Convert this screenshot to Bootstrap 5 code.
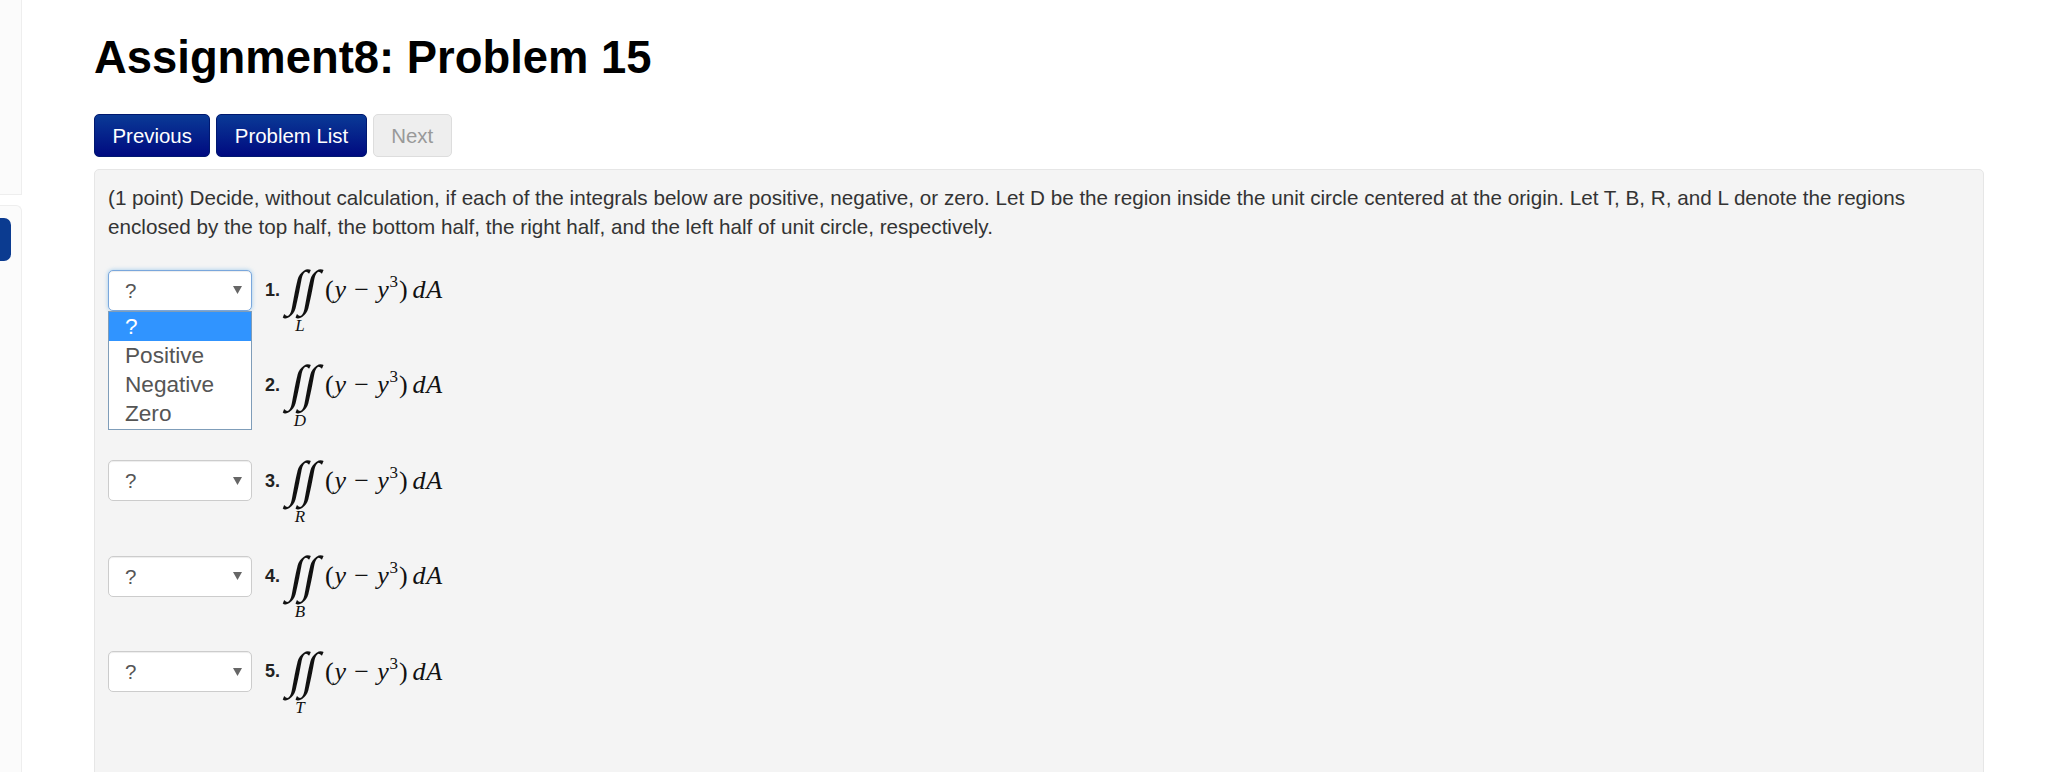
<!DOCTYPE html>
<html lang="en">
<head>
<meta charset="utf-8">
<title>Assignment8: Problem 15</title>
<link rel="stylesheet" href="https://cdn.jsdelivr.net/npm/bootstrap@5.3.0/dist/css/bootstrap.min.css">
<style>
html,body{height:772px;overflow:hidden;background:#fff;}
body{font-family:"Liberation Sans",Arial,sans-serif;font-size:20.66px;line-height:28.5px;color:#333;}
.page-wrap{height:772px;}
.side-rail{width:22px;flex:none;}
.side-top{height:195px;background:#fbfbfb;border-right:1px solid #eee;border-bottom:1px solid #eee;}
.side-bottom{flex:1;margin-top:10px;padding-top:12px;background:#fbfbfb;border:1px solid #eee;border-left:0;border-bottom:0;border-top-right-radius:6px;}
.side-pill{width:11px;height:43px;background:#0b3b90;border-radius:0 7px 7px 0;}
.main-col{padding-left:72px;padding-right:62px;min-width:0;}
.page-title{font-size:45.4px;font-weight:700;line-height:52px;color:#000;margin:32px 0 0;}
.nav-btns{margin-top:30px;gap:6px;}
.nav-btns .btn{font-size:20.4px;line-height:26px;padding:7px 17.500px;height:43px;border-radius:5px;}
.btn-navy{background:linear-gradient(#0a3a96,#000a80);border:1px solid #00186f;color:#fff;}
.btn-off{background:#eee;border:1px solid #ddd;color:#999;opacity:1;}
.btn-off:disabled{background:#eee;border-color:#ddd;color:#999;opacity:1;}
.prob-well{margin-top:12px;height:620px;background:#f4f4f4;border:1px solid #e6e6e6;border-radius:5px;padding:14px 13px 0;}
.prob-text{margin:0 0 28.500px;}
.prob-row{height:41px;margin-bottom:54.4px;}
.choice-box{position:relative;width:144px;flex:none;margin-right:13px;}
.choice{width:144px;height:41px;padding:0 0 0 16px;font-family:"Liberation Sans",Arial,sans-serif;font-size:20.5px;line-height:39px;color:#555;border:1px solid #ccc;border-radius:5px;box-shadow:inset 0 1px 1px rgba(0,0,0,.075);
background-color:#fff;background-image:url("data:image/svg+xml,%3Csvg xmlns='http://www.w3.org/2000/svg' viewBox='0 0 9 8'%3E%3Cpath fill='%23666' d='M0 0h9L4.500 8z'/%3E%3C/svg%3E");background-size:9px 8px;background-position:right 9px center;background-repeat:no-repeat;}
.choice-on{border-color:#7aa7dc;box-shadow:inset 0 1px 1px rgba(0,0,0,.075),0 0 4px rgba(102,175,233,.6);}
.choice-menu{position:absolute;left:0;top:41px;width:144px;z-index:5;background:#fff;border:1px solid #7f9db9;margin:0;padding:0;list-style:none;font-size:22.6px;line-height:29.3px;color:#555;}
.choice-menu li{padding-left:16px;}
.choice-menu .picked{background:#3094ff;color:#fff;}
.prob-num{font-weight:700;font-size:18px;color:#222;width:23px;flex:none;text-align:left;}
.formula{font-family:"Liberation Serif","Times New Roman",serif;color:#111;font-size:26px;line-height:30px;letter-spacing:.85px;}
.int-stack{width:37px;height:30px;position:relative;flex:none;}
.int-signs{position:absolute;left:3px;top:-13px;font-size:50px;line-height:52px;height:52px;font-family:"Liberation Serif",serif;letter-spacing:-1px;white-space:nowrap;transform:skewX(-11deg);}
.int-sub{position:absolute;left:2px;top:42px;width:20px;text-align:center;font-size:17px;line-height:18px;font-style:italic;letter-spacing:0;}
.formula i{font-style:italic;}
.formula sup{font-size:17px;top:-.65em;}
</style>
</head>
<body>
<div class="d-flex page-wrap">
  <aside class="side-rail d-flex flex-column">
    <div class="side-top"></div>
    <div class="side-bottom"><div class="side-pill"></div></div>
  </aside>
  <main class="main-col flex-grow-1">
    <h1 class="page-title">Assignment8: Problem 15</h1>
    <div class="d-flex nav-btns">
      <button type="button" class="btn btn-navy">Previous</button>
      <button type="button" class="btn btn-navy">Problem List</button>
      <button type="button" class="btn btn-off" disabled>Next</button>
    </div>
    <div class="prob-well">
      <p class="prob-text">(1 point) Decide, without calculation, if each of the integrals below are positive, negative, or zero. Let D be the region inside the unit circle centered at the origin. Let T, B, R, and L denote the regions enclosed by the top half, the bottom half, the right half, and the left half of unit circle, respectively.</p>

      <div class="d-flex align-items-center prob-row">
        <div class="choice-box">
          <select class="form-select choice choice-on"><option>?</option><option>Positive</option><option>Negative</option><option>Zero</option></select>
          <ul class="choice-menu"><li class="picked">?</li><li>Positive</li><li>Negative</li><li>Zero</li></ul>
        </div>
        <span class="prob-num">1.</span>
        <div class="d-flex align-items-center formula"><span class="int-stack"><span class="int-signs">∫∫</span><span class="int-sub">L</span></span><span>(<i>y</i> − <i>y</i><sup>3</sup>)<i class="ms-1">dA</i></span></div>
      </div>

      <div class="d-flex align-items-center prob-row">
        <div class="choice-box"><select class="form-select choice"><option>?</option></select></div>
        <span class="prob-num">2.</span>
        <div class="d-flex align-items-center formula"><span class="int-stack"><span class="int-signs">∫∫</span><span class="int-sub">D</span></span><span>(<i>y</i> − <i>y</i><sup>3</sup>)<i class="ms-1">dA</i></span></div>
      </div>

      <div class="d-flex align-items-center prob-row">
        <div class="choice-box"><select class="form-select choice"><option>?</option></select></div>
        <span class="prob-num">3.</span>
        <div class="d-flex align-items-center formula"><span class="int-stack"><span class="int-signs">∫∫</span><span class="int-sub">R</span></span><span>(<i>y</i> − <i>y</i><sup>3</sup>)<i class="ms-1">dA</i></span></div>
      </div>

      <div class="d-flex align-items-center prob-row">
        <div class="choice-box"><select class="form-select choice"><option>?</option></select></div>
        <span class="prob-num">4.</span>
        <div class="d-flex align-items-center formula"><span class="int-stack"><span class="int-signs">∫∫</span><span class="int-sub">B</span></span><span>(<i>y</i> − <i>y</i><sup>3</sup>)<i class="ms-1">dA</i></span></div>
      </div>

      <div class="d-flex align-items-center prob-row">
        <div class="choice-box"><select class="form-select choice"><option>?</option></select></div>
        <span class="prob-num">5.</span>
        <div class="d-flex align-items-center formula"><span class="int-stack"><span class="int-signs">∫∫</span><span class="int-sub">T</span></span><span>(<i>y</i> − <i>y</i><sup>3</sup>)<i class="ms-1">dA</i></span></div>
      </div>
    </div>
  </main>
</div>
<script src="https://cdn.jsdelivr.net/npm/bootstrap@5.3.0/dist/js/bootstrap.bundle.min.js"></script>
</body>
</html>
